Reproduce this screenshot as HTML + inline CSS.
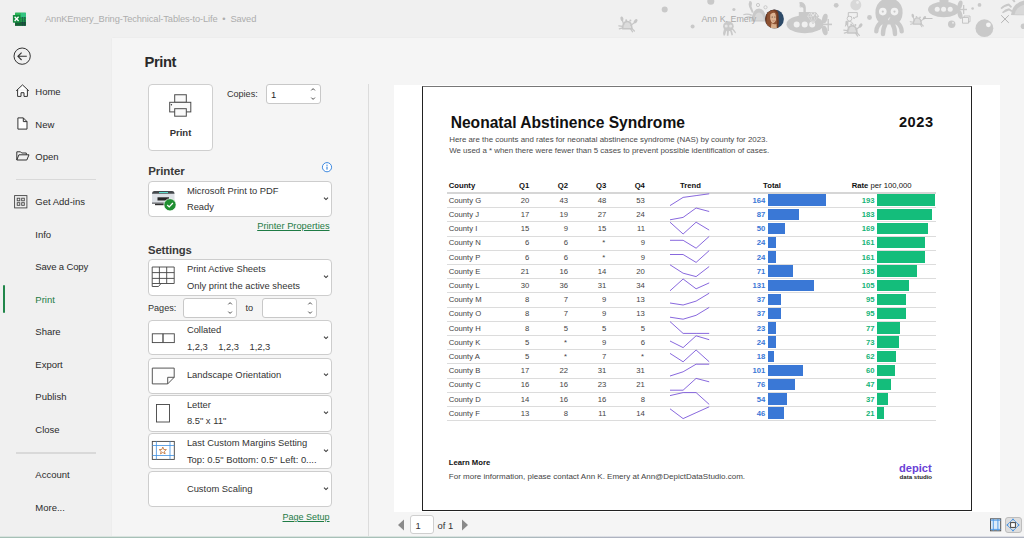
<!DOCTYPE html><html><head><meta charset="utf-8"><style>
html,body{margin:0;padding:0;width:1024px;height:538px;overflow:hidden;background:#f0f0f0;}
body{position:relative;font-family:"Liberation Sans", sans-serif;}
.t{position:absolute;white-space:nowrap;}
.r{position:absolute;}
</style></head><body>
<div class="r" style="left:0px;top:0px;width:1024px;height:538px;background:#f0f0f0;"></div>
<div class="r" style="left:112px;top:38px;width:912px;height:499px;background:#f5f5f5;box-shadow:-0.5px -0.5px 1.5px 0 rgba(0,0,0,0.10);"></div>
<div class="r" style="left:0px;top:536px;width:1024px;height:1px;background:linear-gradient(90deg,#d9e3df 0%,#d9e3df 40%,#dcdee5 60%,#dcdee5 100%);"></div>
<div class="r" style="left:0px;top:537px;width:1024px;height:1px;background:linear-gradient(90deg,#a6c0b6 0%,#a8c0b8 40%,#aeb3c0 60%,#aeb3c0 100%);"></div>
<div class="r" style="left:368px;top:84px;width:1px;height:452px;background:#dcdcdc;"></div>
<svg style="position:absolute;left:12px;top:12px" width="15" height="15" viewBox="0 0 15 15">
<rect x="3" y="0.7" width="11" height="13.1" rx="0.8" fill="#21a346"/>
<rect x="8.5" y="0.7" width="5.5" height="4.6" fill="#33c481"/>
<rect x="3" y="0.7" width="5.5" height="2" fill="#2db85c"/>
<rect x="3" y="10" width="11" height="3.8" fill="#185c37"/>
<path d="M8.5 6 H14 M8.5 9 H14 M10.5 5.3 V13.8 M12.5 5.3 V13.8" stroke="#1a2a5a" stroke-width="0.7" stroke-dasharray="0.8 0.8"/>
<rect x="0.9" y="3" width="7.4" height="7.7" rx="0.6" fill="#138a3e"/>
<path d="M2.6 4.7 L6.6 9 M6.6 4.7 L2.6 9" stroke="#fff" stroke-width="1.3"/>
</svg>
<div class="t" style="left:45.00px;top:15.43px;font-size:9.3px;line-height:9.3px;color:#adadad;font-weight:400;letter-spacing:-0.12px;">AnnKEmery_Bring-Technical-Tables-to-Life&nbsp; &bull; &nbsp;Saved</div>
<svg style="position:absolute;left:0;top:0" width="1024" height="38" viewBox="0 0 1024 38">
<g fill="#c9c9c9">
<!-- crab A -->
<defs><g id="crab">
<path d="M4.6 12.6 Q4.6 5.2 9.2 5.2 Q13.8 5.2 14 12.6 Z" fill="#dcdcdc" stroke="#c6c6c6" stroke-width="1.5" stroke-linejoin="round"/>
<path d="M5.8 8.6 L4.3 4 M12.9 9.2 L16.6 6.3 M4.6 10.2 L0.8 9.6 M4.7 11.7 L1.3 12.7 M13.6 12 L16.4 14.8 M12.6 12.6 L14.6 15.6" stroke="#c6c6c6" stroke-width="1.2" stroke-linecap="round" fill="none"/>
<ellipse cx="3.9" cy="2.6" rx="1.5" ry="2.4" transform="rotate(-12 3.9 2.6)" fill="#c6c6c6"/>
<ellipse cx="17.6" cy="5" rx="1.5" ry="2.4" transform="rotate(40 17.6 5)" fill="#c6c6c6"/>
<circle cx="8.2" cy="4" r="1" fill="#c6c6c6"/><circle cx="12.4" cy="4.4" r="1" fill="#c6c6c6"/>
</g></defs>
<use href="#crab" transform="translate(618 16.2)"/>
<!-- bubbles -->
<circle cx="664.7" cy="9.4" r="3"/><circle cx="692.6" cy="26.5" r="2"/><circle cx="710.8" cy="1.2" r="3.5"/>
<circle cx="733.9" cy="9.5" r="1.6"/>
<!-- small octopus -->
<ellipse cx="728.4" cy="26.2" rx="5.3" ry="5"/><circle cx="726.2" cy="26" r="1.5" fill="#e6e6e6"/><circle cx="730.6" cy="26" r="1.5" fill="#e6e6e6"/>
<path d="M724 29 Q722.5 33 723.5 35.5 L725 35.5 Q725.5 32 727 30 Z M727 30 L726.8 35.8 L728.5 35.8 L729 30 Z M729.5 30 Q731 32 731.5 35.5 L733 35 Q732.5 31.5 731 29 Z M731.5 29 Q734 31.5 735.3 33.5 L736 32.5 Q734.5 29.5 732.5 28 Z"/>
<!-- big crab -->
<path d="M751 21.5 Q752.5 8.5 759 8.5 Q765.5 8.5 766.5 21.5 Z"/>
<path d="M754 20.5 Q755 12.5 759 12.5 Q763 12.5 764 20.5 Z" fill="#d8d8d8"/>
<path d="M752 13 L749.2 7 Q748 3.5 749.5 1 Q751.5 0.5 752 3 L751.5 6.5 L753.5 12 Z"/>
<path d="M752 14.5 Q747 12.5 743.2 14.2 L743.5 15.2 Q747.5 14 751.5 16 Z M752 17 Q748 15.5 745 17.5 L745.5 18.3 Q748.5 17 751.8 18.5 Z"/>
<circle cx="758" cy="5" r="1.6" fill="none" stroke="#c9c9c9" stroke-width="1"/><circle cx="765.5" cy="7.3" r="1.6" fill="none" stroke="#c9c9c9" stroke-width="1"/>
<!-- sub 1 -->
<ellipse cx="805" cy="24.2" rx="18.5" ry="9"/>
<rect x="798.8" y="12" width="12" height="5"/>
<path d="M805.8 13 V7.5 Q805.5 3 801.5 2 Q799.5 1.6 799 3 Q798.6 5.8 800 7.6 Q802.8 6.6 803.4 8.5 V13 Z"/>
<path d="M799.3 3.2 Q799 5.5 800.2 7.2" stroke="#ececec" stroke-width="0.9" fill="none"/>
<ellipse cx="824.8" cy="18.5" rx="2.6" ry="4.8" transform="rotate(15 824.8 18.5)"/>
<ellipse cx="824.8" cy="30.5" rx="2.6" ry="4.8" transform="rotate(-15 824.8 30.5)"/>
<rect x="823" y="23.6" width="9" height="1.6"/><rect x="827.5" y="19" width="1.4" height="12"/>
<circle cx="796.7" cy="24.4" r="3" fill="#f0f0f0"/><circle cx="804.7" cy="24.4" r="3" fill="#f0f0f0"/><circle cx="812.2" cy="24.4" r="3" fill="#f0f0f0"/>
<defs><clipPath id="subclip"><ellipse cx="805" cy="24.2" rx="18.5" ry="9"/><rect x="798.8" y="12" width="12" height="5"/></clipPath></defs>
<path d="M807.5 16.3 L810 12.8 H816 L818.5 16.3 L813 23.4 Z M807.5 16.3 H818.5 M810.8 16.3 L813 23.4 L815.2 16.3 M810 12.8 L810.8 16.3 L813 12.8 L815.2 16.3 L816 12.8" fill="none" stroke="#bdbdbd" stroke-width="0.75"/>
<path d="M807.5 16.3 L810 12.8 H816 L818.5 16.3 L813 23.4 Z M807.5 16.3 H818.5 M810.8 16.3 L813 23.4 L815.2 16.3 M810 12.8 L810.8 16.3 L813 12.8 L815.2 16.3 L816 12.8" fill="none" stroke="#e2e2e2" stroke-width="0.75" clip-path="url(#subclip)"/>
<circle cx="836.2" cy="5.3" r="2.4"/>
<circle cx="855.8" cy="4.9" r="5.5" fill="#d8d8d8"/><circle cx="857.5" cy="2.5" r="1.4" fill="#ececec"/>
<!-- person + chat -->
<path d="M852 17 H848.3 V12.6 H857.3 V17 H855.5 L854 18.8 L853.5 17" fill="none" stroke="#b8b8b8" stroke-width="0.8"/>
<circle cx="849.5" cy="18.6" r="2.4" fill="#f0f0f0" stroke="#bcbcbc" stroke-width="0.8"/>
<path d="M845.3 26.5 Q846 21.5 849.5 21.5 Q853 21.5 853.7 26.5" fill="none" stroke="#bcbcbc" stroke-width="0.8"/>
<use href="#crab" transform="translate(843 20.5)"/>
<circle cx="869.5" cy="17.5" r="2.4"/>
<!-- octopus -->
<path d="M882 0 H896 Q903 4 902.6 13 Q902.3 21 896 24.5 H882 Q875.5 21 875.4 13 Q875.2 4 882 0 Z"/>
<g fill="none" stroke="#c9c9c9" stroke-width="4.4" stroke-linecap="round">
<path d="M881 22.5 Q876.5 26 876.3 31.3"/><path d="M885.5 24 Q883 28 883 34"/><path d="M892.5 24 Q895 28 895 34"/><path d="M897 22.5 Q901.5 26 901.7 31.3"/></g>
<circle cx="882.8" cy="11.6" r="3.8" fill="#f2f2f2"/><circle cx="882.8" cy="11.6" r="1.1"/>
<circle cx="894.5" cy="11.6" r="3.8" fill="#f2f2f2"/><circle cx="894.5" cy="11.6" r="1.1"/>
<path d="M888 19.8 Q888.5 17 890.5 17.3 Q889 18.5 889 20.5 Z" fill="#ececec"/>
<!-- small crab 2 -->
<use href="#crab" transform="translate(909.5 13.5) scale(0.85)"/>
<rect x="923" y="18" width="9.5" height="0.9" fill="#bdbdbd"/>
<!-- sub 2 -->
<ellipse cx="943.7" cy="9.5" rx="15.7" ry="7.8"/>
<rect x="939.5" y="0" width="9" height="2.5"/>
<ellipse cx="960" cy="4.8" rx="2.3" ry="4.5" transform="rotate(15 960 4.8)"/>
<ellipse cx="960" cy="14.5" rx="2.3" ry="4.5" transform="rotate(-15 960 14.5)"/>
<rect x="959" y="8.8" width="8" height="1.4"/><rect x="963" y="5" width="1.3" height="9"/>
<circle cx="937.2" cy="9.3" r="2.5" fill="#f0f0f0"/><circle cx="943.6" cy="9.3" r="2.5" fill="#f0f0f0"/><circle cx="950.2" cy="9.3" r="2.5" fill="#f0f0f0"/>
<path d="M962.5 17.5 H968.5 V23.2 H962.5 Z M964 17.5 V16 H970 V21.8 H968.5" fill="none" stroke="#bdbdbd" stroke-width="0.8"/>
<circle cx="951.7" cy="24.3" r="3.7"/><circle cx="953" cy="22.8" r="1" fill="#e8e8e8"/>
<circle cx="972.6" cy="8.5" r="1.3"/><circle cx="979.5" cy="4.9" r="1.9"/>
<circle cx="984.4" cy="28.2" r="8.9"/><circle cx="988.4" cy="24.8" r="2.4" fill="#f4f4f4"/>
<path d="M1001.2 15.3 L1008.8 22.9 M1008.8 15.3 L1001.2 22.9" stroke="#a3a3a3" stroke-width="0.8"/>
<!-- big crab right -->
<path d="M1011 15 Q1013 0 1030 0 V15.5 Z"/>
<path d="M1014.5 14.5 Q1017 4 1030 4 V15 Z" fill="#d8d8d8"/>
<path d="M1000.5 8 Q1004 4 1009 3.5 L1012 6.5 L1011 8 L1008.5 5.8 Q1004.5 6.8 1001.5 9.2 Z"/>
<path d="M1002 12.3 Q1005 8.8 1009 8.3 L1012.5 10.5 L1011.5 12 L1009 10.4 Q1006 11.2 1003 13.3 Z"/>
<path d="M1012 0 L1014 2.5 L1015.5 1.5 L1014.5 0 Z"/>
<circle cx="1023.5" cy="26.3" r="2.8"/>
</g>
<g>
<defs><clipPath id="av"><circle cx="774.5" cy="19" r="9.4"/></clipPath><filter id="bl"><feGaussianBlur stdDeviation="0.45"/></filter></defs>
<circle cx="774.5" cy="19" r="9.4" fill="#2d4a68"/>
<g clip-path="url(#av)" filter="url(#bl)">
<path d="M765 14 Q767 8.5 773 9 Q778.5 9.5 778.5 15 Q779.5 22 778 30 H765 Z" fill="#6e3a22"/>
<path d="M767.5 13 Q770 10 773.5 10.5 Q776 11.5 776.8 14 L777 24 Q775 28 772 30 H766.5 Q766 22 767.5 13 Z" fill="#8c5132"/>
<path d="M770.3 14.5 Q772.5 11.8 775 13 Q776.6 16 776 20 Q774.8 23.5 772.8 23.2 Q770.8 22.2 770.2 19 Z" fill="#dcb392"/>
<path d="M771.5 23 Q774 25 776.5 24 L777 30 H770.5 Z" fill="#d7ac88"/>
<circle cx="772.2" cy="17" r="0.55" fill="#3a2a20"/><circle cx="774.9" cy="17" r="0.55" fill="#3a2a20"/>
<path d="M772.5 20.6 Q773.6 21.3 774.6 20.6" stroke="#a0604a" stroke-width="0.5" fill="none"/>
</g>
</g>
</svg>
<div class="t" style="left:701.40px;top:15.37px;font-size:8.9px;line-height:8.9px;color:#a8a8a8;font-weight:400;">Ann K. Emery</div>
<svg style="position:absolute;left:12px;top:46px" width="21" height="21" viewBox="0 0 21 21">
<circle cx="10.15" cy="10.15" r="8.15" fill="none" stroke="#333" stroke-width="1"/>
<path d="M14.8 10.3 H6 M9.6 6.6 L5.9 10.3 L9.6 14" fill="none" stroke="#333" stroke-width="1.1"/>
</svg>
<div class="t" style="left:35.30px;top:87.36px;font-size:9.5px;line-height:9.5px;color:#2b2b2b;font-weight:400;">Home</div>
<div class="t" style="left:35.30px;top:119.86px;font-size:9.5px;line-height:9.5px;color:#2b2b2b;font-weight:400;">New</div>
<div class="t" style="left:35.30px;top:152.36px;font-size:9.5px;line-height:9.5px;color:#2b2b2b;font-weight:400;">Open</div>
<div class="t" style="left:35.30px;top:197.36px;font-size:9.5px;line-height:9.5px;color:#2b2b2b;font-weight:400;">Get Add-ins</div>
<div class="t" style="left:35.30px;top:229.86px;font-size:9.5px;line-height:9.5px;color:#2b2b2b;font-weight:400;">Info</div>
<div class="t" style="left:35.30px;top:262.36px;font-size:9.5px;line-height:9.5px;color:#2b2b2b;font-weight:400;letter-spacing:-0.15px;">Save a Copy</div>
<div class="t" style="left:35.30px;top:294.86px;font-size:9.5px;line-height:9.5px;color:#1e7b45;font-weight:400;">Print</div>
<div class="t" style="left:35.30px;top:327.36px;font-size:9.5px;line-height:9.5px;color:#2b2b2b;font-weight:400;">Share</div>
<div class="t" style="left:35.30px;top:359.86px;font-size:9.5px;line-height:9.5px;color:#2b2b2b;font-weight:400;">Export</div>
<div class="t" style="left:35.30px;top:392.36px;font-size:9.5px;line-height:9.5px;color:#2b2b2b;font-weight:400;">Publish</div>
<div class="t" style="left:35.30px;top:424.86px;font-size:9.5px;line-height:9.5px;color:#2b2b2b;font-weight:400;">Close</div>
<div class="t" style="left:35.30px;top:470.16px;font-size:9.5px;line-height:9.5px;color:#2b2b2b;font-weight:400;">Account</div>
<div class="t" style="left:35.30px;top:503.36px;font-size:9.5px;line-height:9.5px;color:#2b2b2b;font-weight:400;">More...</div>
<div class="r" style="left:16px;top:178.5px;width:80px;height:1.5px;background:#d9d9d9;"></div>
<div class="r" style="left:16px;top:452px;width:80px;height:1.5px;background:#d9d9d9;"></div>
<div class="r" style="left:3px;top:285px;width:2.2px;height:28px;background:#21864a;border-radius:1px;"></div>
<svg style="position:absolute;left:15px;top:84px" width="14" height="14" viewBox="0 0 14 14" fill="none" stroke="#333" stroke-width="1">
<path d="M1.2 6.8 L7.5 0.9 L13.8 6.8 M2.6 5.6 V12.4 H6 V8.7 H9 V12.4 H12.4 V5.6" fill="#fff"/></svg>
<svg style="position:absolute;left:17px;top:117px" width="11" height="13" viewBox="0 0 11 13" fill="none" stroke="#333" stroke-width="1">
<path d="M0.9 0.9 H6.3 L10 4.6 V12.1 H0.9 Z M6.3 0.9 V4.6 H10" fill="#fff"/></svg>
<svg style="position:absolute;left:15.5px;top:150.5px" width="14" height="10" viewBox="0 0 14 10" fill="none" stroke="#333" stroke-width="1">
<path d="M0.8 9 V0.8 H4.5 L5.7 2 H10.3 V3.8 M0.8 9 L2.9 3.8 H13 L10.8 9 Z"/></svg>
<svg style="position:absolute;left:14px;top:194.5px" width="14" height="14" viewBox="0 0 14 14" fill="none" stroke="#444" stroke-width="0.9">
<rect x="0.6" y="0.6" width="12.3" height="12.3"/><rect x="3.2" y="3.2" width="2.6" height="2.6"/><rect x="7.7" y="3.2" width="2.6" height="2.6"/><rect x="3.2" y="7.7" width="2.6" height="2.6"/><rect x="7.7" y="7.7" width="2.6" height="2.6"/></svg>
<div class="t" style="left:144.60px;top:54.87px;font-size:14.8px;line-height:14.8px;color:#2a2a2a;font-weight:700;letter-spacing:-0.45px;">Print</div>
<div class="r" style="left:147.5px;top:84px;width:65px;height:67px;background:#fff;border:1px solid #cfcfcf;border-radius:4px;box-sizing:border-box;"></div>
<svg style="position:absolute;left:168px;top:93px" width="25" height="25" viewBox="0 0 25 25" stroke="#4a4a4a" stroke-width="1">
<rect x="6.7" y="1.75" width="11.6" height="7.6" fill="#fafafa"/><rect x="1.7" y="9.3" width="21.1" height="9.6" fill="#fafafa"/><rect x="6.7" y="15.7" width="11.6" height="7.5" fill="#fafafa"/><circle cx="3.4" cy="11.8" r="0.7" fill="#333" stroke="none"/></svg>
<div class="t" style="left:80.50px;width:200px;text-align:center;top:127.96px;font-size:9.5px;line-height:9.5px;color:#333;font-weight:700;">Print</div>
<div class="t" style="left:226.90px;top:90.10px;font-size:9.1px;line-height:9.1px;color:#333;font-weight:400;">Copies:</div>
<div class="r" style="left:266px;top:84px;width:55px;height:20px;background:#fff;border:1px solid #c8c8c8;border-radius:3px;box-sizing:border-box;"></div>
<div class="t" style="left:271.00px;top:90.04px;font-size:9.4px;line-height:9.4px;color:#262626;font-weight:400;">1</div>
<svg style="position:absolute;left:309px;top:86px" width="8" height="16" viewBox="0 0 8 16" fill="none" stroke="#4a4a4a" stroke-width="1">
<path d="M2.3 4.4 L4.1 2.6 L5.9 4.4 M2.3 11.6 L4.1 13.4 L5.9 11.6"/></svg>
<div class="t" style="left:148.20px;top:165.77px;font-size:11.5px;line-height:11.5px;color:#3a3a3a;font-weight:700;letter-spacing:-0.1px;">Printer</div>
<svg style="position:absolute;left:321px;top:161px" width="12" height="12" viewBox="0 0 12 12">
<circle cx="6" cy="6.2" r="4.6" fill="#fff" stroke="#3f8ae0" stroke-width="1"/><rect x="5.4" y="5.6" width="1.2" height="3" fill="#3f8ae0"/><circle cx="6" cy="4.2" r="0.7" fill="#3f8ae0"/></svg>
<div class="r" style="left:147.5px;top:180.6px;width:184px;height:36.2px;background:#fff;border:1px solid #cdcdcd;border-radius:4px;box-sizing:border-box;"></div>
<svg style="position:absolute;left:322px;top:194.5px" width="8" height="8" viewBox="0 0 8 8" fill="none" stroke="#3a3a3a" stroke-width="1.1">
<path d="M2 2.7 L4 4.6 L6 2.7"/></svg>
<div class="t" style="left:186.90px;top:185.94px;font-size:9.4px;line-height:9.4px;color:#333;font-weight:400;">Microsoft Print to PDF</div>
<div class="t" style="left:186.90px;top:202.34px;font-size:9.4px;line-height:9.4px;color:#333;font-weight:400;">Ready</div>
<svg style="position:absolute;left:151px;top:188px" width="27" height="24" viewBox="0 0 27 24">
<rect x="1" y="5" width="22.5" height="10.5" fill="#dde1e6"/><path d="M1 5.8 Q1 2.9 3.5 2.9 H21 Q23.5 2.9 23.5 5.8 Z" fill="#45484c"/>
<rect x="8" y="4" width="9" height="1.1" fill="#5fdccc"/><rect x="1" y="14.5" width="22.5" height="1.3" fill="#6a6d71"/>
<rect x="6.5" y="9.3" width="11.5" height="3.2" fill="#262626"/><rect x="4" y="15.8" width="11" height="1.4" fill="#303030"/>
<circle cx="19" cy="16.8" r="6.1" fill="#1f8f31" stroke="#fff" stroke-width="0.7"/><path d="M16.2 17 L18.2 18.9 L21.9 15" stroke="#fff" stroke-width="1.3" fill="none"/></svg>
<div class="t" style="left:257.20px;top:221.93px;font-size:9.3px;line-height:9.3px;color:#1e7b45;font-weight:400;"><u>Printer Properties</u></div>
<div class="t" style="left:148.00px;top:244.93px;font-size:11.3px;line-height:11.3px;color:#3a3a3a;font-weight:700;letter-spacing:-0.1px;">Settings</div>
<div class="r" style="left:147.5px;top:259.1px;width:184px;height:37px;background:#fff;border:1px solid #cdcdcd;border-radius:4px;box-sizing:border-box;"></div>
<svg style="position:absolute;left:322px;top:273.4px" width="8" height="8" viewBox="0 0 8 8" fill="none" stroke="#3a3a3a" stroke-width="1.1">
<path d="M2 2.7 L4 4.6 L6 2.7"/></svg>
<div class="t" style="left:186.90px;top:264.44px;font-size:9.4px;line-height:9.4px;color:#333;font-weight:400;">Print Active Sheets</div>
<div class="t" style="left:186.90px;top:280.84px;font-size:9.4px;line-height:9.4px;color:#333;font-weight:400;">Only print the active sheets</div>
<svg style="position:absolute;left:151px;top:265px" width="25" height="23" viewBox="0 0 25 23" fill="none" stroke="#444" stroke-width="0.9">
<path d="M1.2 2 H23.2 V18.5 H10 L7.5 21.5 H1.2 Z M1.2 7.6 H23.2 M1.2 13.4 H23.2 M1.2 18.5 H10 M8.4 2 V18.5 M15.7 2 V18.5"/></svg>
<div class="t" style="left:148.00px;top:304.00px;font-size:9.1px;line-height:9.1px;color:#333;font-weight:400;">Pages:</div>
<div class="r" style="left:183px;top:298px;width:54px;height:20px;background:#fff;border:1px solid #c8c8c8;border-radius:3px;box-sizing:border-box;"></div>
<svg style="position:absolute;left:226px;top:300px" width="8" height="16" viewBox="0 0 8 16" fill="none" stroke="#4a4a4a" stroke-width="1">
<path d="M2.3 4.4 L4.1 2.6 L5.9 4.4 M2.3 11.6 L4.1 13.4 L5.9 11.6"/></svg>
<div class="t" style="left:149.40px;width:200px;text-align:center;top:303.91px;font-size:9.2px;line-height:9.2px;color:#333;font-weight:400;">to</div>
<div class="r" style="left:262px;top:298px;width:54.5px;height:20px;background:#fff;border:1px solid #c8c8c8;border-radius:3px;box-sizing:border-box;"></div>
<svg style="position:absolute;left:306px;top:300px" width="8" height="16" viewBox="0 0 8 16" fill="none" stroke="#4a4a4a" stroke-width="1">
<path d="M2.3 4.4 L4.1 2.6 L5.9 4.4 M2.3 11.6 L4.1 13.4 L5.9 11.6"/></svg>
<div class="r" style="left:147.5px;top:320.1px;width:184px;height:35.1px;background:#fff;border:1px solid #cdcdcd;border-radius:4px;box-sizing:border-box;"></div>
<svg style="position:absolute;left:322px;top:333.5px" width="8" height="8" viewBox="0 0 8 8" fill="none" stroke="#3a3a3a" stroke-width="1.1">
<path d="M2 2.7 L4 4.6 L6 2.7"/></svg>
<div class="t" style="left:186.90px;top:325.44px;font-size:9.4px;line-height:9.4px;color:#333;font-weight:400;">Collated</div>
<div class="t" style="left:186.90px;top:341.84px;font-size:9.4px;line-height:9.4px;color:#333;font-weight:400;">1,2,3&nbsp;&nbsp;&nbsp;&nbsp;1,2,3&nbsp;&nbsp;&nbsp;&nbsp;1,2,3</div>
<svg style="position:absolute;left:151px;top:331.5px" width="24" height="13" viewBox="0 0 24 13" fill="none" stroke="#444" stroke-width="0.9">
<rect x="1.3" y="1.8" width="22" height="8.8"/><path d="M12 1.8 V10.6" stroke-width="1.3"/></svg>
<div class="r" style="left:147.5px;top:357.5px;width:184px;height:36.2px;background:#fff;border:1px solid #cdcdcd;border-radius:4px;box-sizing:border-box;"></div>
<svg style="position:absolute;left:322px;top:371.4px" width="8" height="8" viewBox="0 0 8 8" fill="none" stroke="#3a3a3a" stroke-width="1.1">
<path d="M2 2.7 L4 4.6 L6 2.7"/></svg>
<div class="t" style="left:186.90px;top:370.34px;font-size:9.4px;line-height:9.4px;color:#333;font-weight:400;">Landscape Orientation</div>
<svg style="position:absolute;left:151px;top:366.5px" width="24" height="19" viewBox="0 0 24 19" fill="none" stroke="#444" stroke-width="0.9">
<path d="M1.3 1.1 H23.2 V10.3 L16.7 16.9 H1.3 Z M16.7 16.9 V10.3 H23.2" fill="#fdfdfd"/></svg>
<div class="r" style="left:147.5px;top:394.7px;width:184px;height:37px;background:#fff;border:1px solid #cdcdcd;border-radius:4px;box-sizing:border-box;"></div>
<svg style="position:absolute;left:322px;top:409.0px" width="8" height="8" viewBox="0 0 8 8" fill="none" stroke="#3a3a3a" stroke-width="1.1">
<path d="M2 2.7 L4 4.6 L6 2.7"/></svg>
<div class="t" style="left:186.90px;top:400.04px;font-size:9.4px;line-height:9.4px;color:#333;font-weight:400;">Letter</div>
<div class="t" style="left:186.90px;top:416.44px;font-size:9.4px;line-height:9.4px;color:#333;font-weight:400;">8.5" x 11"</div>
<svg style="position:absolute;left:155px;top:403px" width="16" height="21" viewBox="0 0 16 21" fill="none" stroke="#444" stroke-width="0.9">
<rect x="1.5" y="1.5" width="13" height="17.5"/></svg>
<div class="r" style="left:147.5px;top:433.1px;width:184px;height:35.6px;background:#fff;border:1px solid #cdcdcd;border-radius:4px;box-sizing:border-box;"></div>
<svg style="position:absolute;left:322px;top:446.7px" width="8" height="8" viewBox="0 0 8 8" fill="none" stroke="#3a3a3a" stroke-width="1.1">
<path d="M2 2.7 L4 4.6 L6 2.7"/></svg>
<div class="t" style="left:186.90px;top:438.44px;font-size:9.4px;line-height:9.4px;color:#333;font-weight:400;">Last Custom Margins Setting</div>
<div class="t" style="left:186.90px;top:454.84px;font-size:9.4px;line-height:9.4px;color:#333;font-weight:400;">Top: 0.5" Bottom: 0.5" Left: 0....</div>
<svg style="position:absolute;left:151px;top:440px" width="24" height="21" viewBox="0 0 24 21" fill="none">
<rect x="1.3" y="1.4" width="22" height="18" stroke="#444" stroke-width="0.9"/>
<path d="M5.4 1.4 V19.4 M19 1.4 V19.4 M1.3 5.5 H23.3 M1.3 15.5 H23.3" stroke="#3f8fdf" stroke-width="0.8"/>
<path d="M11.8 7 L12.8 9.5 L15.4 9.6 L13.4 11.3 L14.1 13.9 L11.8 12.4 L9.5 13.9 L10.2 11.3 L8.2 9.6 L10.8 9.5 Z" stroke="#c47c45" stroke-width="0.9"/></svg>
<div class="r" style="left:147.5px;top:471.0px;width:184px;height:36.1px;background:#fff;border:1px solid #cdcdcd;border-radius:4px;box-sizing:border-box;"></div>
<svg style="position:absolute;left:322px;top:484.9px" width="8" height="8" viewBox="0 0 8 8" fill="none" stroke="#3a3a3a" stroke-width="1.1">
<path d="M2 2.7 L4 4.6 L6 2.7"/></svg>
<div class="t" style="left:186.90px;top:483.84px;font-size:9.4px;line-height:9.4px;color:#333;font-weight:400;">Custom Scaling</div>
<div class="t" style="left:282.50px;top:513.18px;font-size:9.0px;line-height:9.0px;color:#1e7b45;font-weight:400;"><u>Page Setup</u></div>
<div class="r" style="left:393.5px;top:84.5px;width:606.5px;height:427.5px;background:#fff;"></div>
<div class="r" style="left:422px;top:86px;width:550px;height:425px;border:1.6px solid #222;border-top-color:#777;box-sizing:border-box;"></div>
<div class="t" style="left:450.70px;top:114.59px;font-size:15.6px;line-height:15.6px;color:#111;font-weight:700;">Neonatal Abstinence Syndrome</div>
<div class="t" style="right:90.40px;top:114.94px;font-size:14.6px;line-height:14.6px;color:#111;font-weight:700;letter-spacing:0.55px;">2023</div>
<div class="t" style="left:449.20px;top:135.51px;font-size:7.9px;line-height:7.9px;color:#4a4a4a;font-weight:400;">Here are the counts and rates for neonatal abstinence syndrome (NAS) by county for 2023.</div>
<div class="t" style="left:449.20px;top:146.91px;font-size:7.9px;line-height:7.9px;color:#4a4a4a;font-weight:400;">We used a * when there were fewer than 5 cases to prevent possible identification of cases.</div>
<div class="t" style="left:448.70px;top:181.98px;font-size:7.7px;line-height:7.7px;color:#111;font-weight:700;">County</div>
<div class="t" style="right:494.80px;top:181.98px;font-size:7.7px;line-height:7.7px;color:#111;font-weight:700;">Q1</div>
<div class="t" style="right:455.90px;top:181.98px;font-size:7.7px;line-height:7.7px;color:#111;font-weight:700;">Q2</div>
<div class="t" style="right:417.80px;top:181.98px;font-size:7.7px;line-height:7.7px;color:#111;font-weight:700;">Q3</div>
<div class="t" style="right:379.10px;top:181.98px;font-size:7.7px;line-height:7.7px;color:#111;font-weight:700;">Q4</div>
<div class="t" style="left:590.50px;width:200px;text-align:center;top:181.98px;font-size:7.7px;line-height:7.7px;color:#111;font-weight:700;">Trend</div>
<div class="t" style="left:672.00px;width:200px;text-align:center;top:181.98px;font-size:7.7px;line-height:7.7px;color:#111;font-weight:700;">Total</div>
<div class="t" style="left:851.70px;top:181.98px;font-size:7.7px;line-height:7.7px;color:#111;font-weight:400;"><b>Rate</b> per 100,000</div>
<div class="r" style="left:447px;top:192px;width:489px;height:2px;background:#d6d6d6;"></div>
<div class="t" style="left:448.70px;top:196.78px;font-size:7.7px;line-height:7.7px;color:#444;font-weight:400;">County G</div>
<div class="t" style="right:494.80px;top:196.78px;font-size:7.7px;line-height:7.7px;color:#444;font-weight:400;">20</div>
<div class="t" style="right:455.90px;top:196.78px;font-size:7.7px;line-height:7.7px;color:#444;font-weight:400;">43</div>
<div class="t" style="right:417.80px;top:196.78px;font-size:7.7px;line-height:7.7px;color:#444;font-weight:400;">48</div>
<div class="t" style="right:379.10px;top:196.78px;font-size:7.7px;line-height:7.7px;color:#444;font-weight:400;">53</div>
<div class="r" style="left:447px;top:207.0px;width:489px;height:1px;background:#dcdcdc;"></div>
<div class="r" style="left:768.2px;top:194.4px;width:57.5576px;height:11.4px;background:#3a78d6;"></div>
<div class="t" style="right:258.80px;top:196.78px;font-size:7.7px;line-height:7.7px;color:#3a78d6;font-weight:700;">164</div>
<div class="r" style="left:877.1px;top:194.4px;width:57.524499999999996px;height:11.4px;background:#14bd7b;"></div>
<div class="t" style="right:149.50px;top:196.78px;font-size:7.7px;line-height:7.7px;color:#15b377;font-weight:700;">193</div>
<div class="t" style="left:448.70px;top:210.98px;font-size:7.7px;line-height:7.7px;color:#444;font-weight:400;">County J</div>
<div class="t" style="right:494.80px;top:210.98px;font-size:7.7px;line-height:7.7px;color:#444;font-weight:400;">17</div>
<div class="t" style="right:455.90px;top:210.98px;font-size:7.7px;line-height:7.7px;color:#444;font-weight:400;">19</div>
<div class="t" style="right:417.80px;top:210.98px;font-size:7.7px;line-height:7.7px;color:#444;font-weight:400;">27</div>
<div class="t" style="right:379.10px;top:210.98px;font-size:7.7px;line-height:7.7px;color:#444;font-weight:400;">24</div>
<div class="r" style="left:447px;top:221.0px;width:489px;height:1px;background:#dcdcdc;"></div>
<div class="r" style="left:768.2px;top:208.6px;width:30.3458px;height:11.4px;background:#3a78d6;"></div>
<div class="t" style="right:258.80px;top:210.98px;font-size:7.7px;line-height:7.7px;color:#3a78d6;font-weight:700;">87</div>
<div class="r" style="left:877.1px;top:208.6px;width:54.55949999999999px;height:11.4px;background:#14bd7b;"></div>
<div class="t" style="right:149.50px;top:210.98px;font-size:7.7px;line-height:7.7px;color:#15b377;font-weight:700;">183</div>
<div class="t" style="left:448.70px;top:225.18px;font-size:7.7px;line-height:7.7px;color:#444;font-weight:400;">County I</div>
<div class="t" style="right:494.80px;top:225.18px;font-size:7.7px;line-height:7.7px;color:#444;font-weight:400;">15</div>
<div class="t" style="right:455.90px;top:225.18px;font-size:7.7px;line-height:7.7px;color:#444;font-weight:400;">9</div>
<div class="t" style="right:417.80px;top:225.18px;font-size:7.7px;line-height:7.7px;color:#444;font-weight:400;">15</div>
<div class="t" style="right:379.10px;top:225.18px;font-size:7.7px;line-height:7.7px;color:#444;font-weight:400;">11</div>
<div class="r" style="left:447px;top:235.5px;width:489px;height:1px;background:#dcdcdc;"></div>
<div class="r" style="left:768.2px;top:222.8px;width:17.27px;height:11.4px;background:#3a78d6;"></div>
<div class="t" style="right:258.80px;top:225.18px;font-size:7.7px;line-height:7.7px;color:#3a78d6;font-weight:700;">50</div>
<div class="r" style="left:877.1px;top:222.8px;width:50.4085px;height:11.4px;background:#14bd7b;"></div>
<div class="t" style="right:149.50px;top:225.18px;font-size:7.7px;line-height:7.7px;color:#15b377;font-weight:700;">169</div>
<div class="t" style="left:448.70px;top:239.38px;font-size:7.7px;line-height:7.7px;color:#444;font-weight:400;">County N</div>
<div class="t" style="right:494.80px;top:239.38px;font-size:7.7px;line-height:7.7px;color:#444;font-weight:400;">6</div>
<div class="t" style="right:455.90px;top:239.38px;font-size:7.7px;line-height:7.7px;color:#444;font-weight:400;">6</div>
<div class="t" style="right:418.80px;top:239.38px;font-size:7.7px;line-height:7.7px;color:#444;font-weight:400;">*</div>
<div class="t" style="right:379.10px;top:239.38px;font-size:7.7px;line-height:7.7px;color:#444;font-weight:400;">9</div>
<div class="r" style="left:447px;top:249.5px;width:489px;height:1px;background:#dcdcdc;"></div>
<div class="r" style="left:768.2px;top:237.0px;width:8.0816px;height:11.4px;background:#3a78d6;"></div>
<div class="t" style="right:258.80px;top:239.38px;font-size:7.7px;line-height:7.7px;color:#3a78d6;font-weight:700;">24</div>
<div class="r" style="left:877.1px;top:237.0px;width:48.0365px;height:11.4px;background:#14bd7b;"></div>
<div class="t" style="right:149.50px;top:239.38px;font-size:7.7px;line-height:7.7px;color:#15b377;font-weight:700;">161</div>
<div class="t" style="left:448.70px;top:253.58px;font-size:7.7px;line-height:7.7px;color:#444;font-weight:400;">County P</div>
<div class="t" style="right:494.80px;top:253.58px;font-size:7.7px;line-height:7.7px;color:#444;font-weight:400;">6</div>
<div class="t" style="right:455.90px;top:253.58px;font-size:7.7px;line-height:7.7px;color:#444;font-weight:400;">6</div>
<div class="t" style="right:418.80px;top:253.58px;font-size:7.7px;line-height:7.7px;color:#444;font-weight:400;">*</div>
<div class="t" style="right:379.10px;top:253.58px;font-size:7.7px;line-height:7.7px;color:#444;font-weight:400;">9</div>
<div class="r" style="left:447px;top:264.0px;width:489px;height:1px;background:#dcdcdc;"></div>
<div class="r" style="left:768.2px;top:251.20000000000002px;width:8.0816px;height:11.4px;background:#3a78d6;"></div>
<div class="t" style="right:258.80px;top:253.58px;font-size:7.7px;line-height:7.7px;color:#3a78d6;font-weight:700;">24</div>
<div class="r" style="left:877.1px;top:251.20000000000002px;width:48.0365px;height:11.4px;background:#14bd7b;"></div>
<div class="t" style="right:149.50px;top:253.58px;font-size:7.7px;line-height:7.7px;color:#15b377;font-weight:700;">161</div>
<div class="t" style="left:448.70px;top:267.78px;font-size:7.7px;line-height:7.7px;color:#444;font-weight:400;">County E</div>
<div class="t" style="right:494.80px;top:267.78px;font-size:7.7px;line-height:7.7px;color:#444;font-weight:400;">21</div>
<div class="t" style="right:455.90px;top:267.78px;font-size:7.7px;line-height:7.7px;color:#444;font-weight:400;">16</div>
<div class="t" style="right:417.80px;top:267.78px;font-size:7.7px;line-height:7.7px;color:#444;font-weight:400;">14</div>
<div class="t" style="right:379.10px;top:267.78px;font-size:7.7px;line-height:7.7px;color:#444;font-weight:400;">20</div>
<div class="r" style="left:447px;top:278.0px;width:489px;height:1px;background:#dcdcdc;"></div>
<div class="r" style="left:768.2px;top:265.40000000000003px;width:24.6914px;height:11.4px;background:#3a78d6;"></div>
<div class="t" style="right:258.80px;top:267.78px;font-size:7.7px;line-height:7.7px;color:#3a78d6;font-weight:700;">71</div>
<div class="r" style="left:877.1px;top:265.40000000000003px;width:40.32749999999999px;height:11.4px;background:#14bd7b;"></div>
<div class="t" style="right:149.50px;top:267.78px;font-size:7.7px;line-height:7.7px;color:#15b377;font-weight:700;">135</div>
<div class="t" style="left:448.70px;top:281.98px;font-size:7.7px;line-height:7.7px;color:#444;font-weight:400;">County L</div>
<div class="t" style="right:494.80px;top:281.98px;font-size:7.7px;line-height:7.7px;color:#444;font-weight:400;">30</div>
<div class="t" style="right:455.90px;top:281.98px;font-size:7.7px;line-height:7.7px;color:#444;font-weight:400;">36</div>
<div class="t" style="right:417.80px;top:281.98px;font-size:7.7px;line-height:7.7px;color:#444;font-weight:400;">31</div>
<div class="t" style="right:379.10px;top:281.98px;font-size:7.7px;line-height:7.7px;color:#444;font-weight:400;">34</div>
<div class="r" style="left:447px;top:292.0px;width:489px;height:1px;background:#dcdcdc;"></div>
<div class="r" style="left:768.2px;top:279.6px;width:45.8954px;height:11.4px;background:#3a78d6;"></div>
<div class="t" style="right:258.80px;top:281.98px;font-size:7.7px;line-height:7.7px;color:#3a78d6;font-weight:700;">131</div>
<div class="r" style="left:877.1px;top:279.6px;width:31.4325px;height:11.4px;background:#14bd7b;"></div>
<div class="t" style="right:149.50px;top:281.98px;font-size:7.7px;line-height:7.7px;color:#15b377;font-weight:700;">105</div>
<div class="t" style="left:448.70px;top:296.18px;font-size:7.7px;line-height:7.7px;color:#444;font-weight:400;">County M</div>
<div class="t" style="right:494.80px;top:296.18px;font-size:7.7px;line-height:7.7px;color:#444;font-weight:400;">8</div>
<div class="t" style="right:455.90px;top:296.18px;font-size:7.7px;line-height:7.7px;color:#444;font-weight:400;">7</div>
<div class="t" style="right:417.80px;top:296.18px;font-size:7.7px;line-height:7.7px;color:#444;font-weight:400;">9</div>
<div class="t" style="right:379.10px;top:296.18px;font-size:7.7px;line-height:7.7px;color:#444;font-weight:400;">13</div>
<div class="r" style="left:447px;top:306.5px;width:489px;height:1px;background:#dcdcdc;"></div>
<div class="r" style="left:768.2px;top:293.8px;width:12.675799999999999px;height:11.4px;background:#3a78d6;"></div>
<div class="t" style="right:258.80px;top:296.18px;font-size:7.7px;line-height:7.7px;color:#3a78d6;font-weight:700;">37</div>
<div class="r" style="left:877.1px;top:293.8px;width:28.467499999999998px;height:11.4px;background:#14bd7b;"></div>
<div class="t" style="right:149.50px;top:296.18px;font-size:7.7px;line-height:7.7px;color:#15b377;font-weight:700;">95</div>
<div class="t" style="left:448.70px;top:310.38px;font-size:7.7px;line-height:7.7px;color:#444;font-weight:400;">County O</div>
<div class="t" style="right:494.80px;top:310.38px;font-size:7.7px;line-height:7.7px;color:#444;font-weight:400;">8</div>
<div class="t" style="right:455.90px;top:310.38px;font-size:7.7px;line-height:7.7px;color:#444;font-weight:400;">7</div>
<div class="t" style="right:417.80px;top:310.38px;font-size:7.7px;line-height:7.7px;color:#444;font-weight:400;">9</div>
<div class="t" style="right:379.10px;top:310.38px;font-size:7.7px;line-height:7.7px;color:#444;font-weight:400;">13</div>
<div class="r" style="left:447px;top:320.5px;width:489px;height:1px;background:#dcdcdc;"></div>
<div class="r" style="left:768.2px;top:308.0px;width:12.675799999999999px;height:11.4px;background:#3a78d6;"></div>
<div class="t" style="right:258.80px;top:310.38px;font-size:7.7px;line-height:7.7px;color:#3a78d6;font-weight:700;">37</div>
<div class="r" style="left:877.1px;top:308.0px;width:28.467499999999998px;height:11.4px;background:#14bd7b;"></div>
<div class="t" style="right:149.50px;top:310.38px;font-size:7.7px;line-height:7.7px;color:#15b377;font-weight:700;">95</div>
<div class="t" style="left:448.70px;top:324.58px;font-size:7.7px;line-height:7.7px;color:#444;font-weight:400;">County H</div>
<div class="t" style="right:494.80px;top:324.58px;font-size:7.7px;line-height:7.7px;color:#444;font-weight:400;">8</div>
<div class="t" style="right:455.90px;top:324.58px;font-size:7.7px;line-height:7.7px;color:#444;font-weight:400;">5</div>
<div class="t" style="right:417.80px;top:324.58px;font-size:7.7px;line-height:7.7px;color:#444;font-weight:400;">5</div>
<div class="t" style="right:379.10px;top:324.58px;font-size:7.7px;line-height:7.7px;color:#444;font-weight:400;">5</div>
<div class="r" style="left:447px;top:335.0px;width:489px;height:1px;background:#dcdcdc;"></div>
<div class="r" style="left:768.2px;top:322.20000000000005px;width:7.728199999999999px;height:11.4px;background:#3a78d6;"></div>
<div class="t" style="right:258.80px;top:324.58px;font-size:7.7px;line-height:7.7px;color:#3a78d6;font-weight:700;">23</div>
<div class="r" style="left:877.1px;top:322.20000000000005px;width:23.1305px;height:11.4px;background:#14bd7b;"></div>
<div class="t" style="right:149.50px;top:324.58px;font-size:7.7px;line-height:7.7px;color:#15b377;font-weight:700;">77</div>
<div class="t" style="left:448.70px;top:338.78px;font-size:7.7px;line-height:7.7px;color:#444;font-weight:400;">County K</div>
<div class="t" style="right:494.80px;top:338.78px;font-size:7.7px;line-height:7.7px;color:#444;font-weight:400;">5</div>
<div class="t" style="right:456.90px;top:338.78px;font-size:7.7px;line-height:7.7px;color:#444;font-weight:400;">*</div>
<div class="t" style="right:417.80px;top:338.78px;font-size:7.7px;line-height:7.7px;color:#444;font-weight:400;">9</div>
<div class="t" style="right:379.10px;top:338.78px;font-size:7.7px;line-height:7.7px;color:#444;font-weight:400;">6</div>
<div class="r" style="left:447px;top:349.0px;width:489px;height:1px;background:#dcdcdc;"></div>
<div class="r" style="left:768.2px;top:336.40000000000003px;width:8.0816px;height:11.4px;background:#3a78d6;"></div>
<div class="t" style="right:258.80px;top:338.78px;font-size:7.7px;line-height:7.7px;color:#3a78d6;font-weight:700;">24</div>
<div class="r" style="left:877.1px;top:336.40000000000003px;width:21.9445px;height:11.4px;background:#14bd7b;"></div>
<div class="t" style="right:149.50px;top:338.78px;font-size:7.7px;line-height:7.7px;color:#15b377;font-weight:700;">73</div>
<div class="t" style="left:448.70px;top:352.98px;font-size:7.7px;line-height:7.7px;color:#444;font-weight:400;">County A</div>
<div class="t" style="right:494.80px;top:352.98px;font-size:7.7px;line-height:7.7px;color:#444;font-weight:400;">5</div>
<div class="t" style="right:456.90px;top:352.98px;font-size:7.7px;line-height:7.7px;color:#444;font-weight:400;">*</div>
<div class="t" style="right:417.80px;top:352.98px;font-size:7.7px;line-height:7.7px;color:#444;font-weight:400;">7</div>
<div class="t" style="right:380.10px;top:352.98px;font-size:7.7px;line-height:7.7px;color:#444;font-weight:400;">*</div>
<div class="r" style="left:447px;top:363.0px;width:489px;height:1px;background:#dcdcdc;"></div>
<div class="r" style="left:768.2px;top:350.6px;width:5.9612px;height:11.4px;background:#3a78d6;"></div>
<div class="t" style="right:258.80px;top:352.98px;font-size:7.7px;line-height:7.7px;color:#3a78d6;font-weight:700;">18</div>
<div class="r" style="left:877.1px;top:350.6px;width:18.683px;height:11.4px;background:#14bd7b;"></div>
<div class="t" style="right:149.50px;top:352.98px;font-size:7.7px;line-height:7.7px;color:#15b377;font-weight:700;">62</div>
<div class="t" style="left:448.70px;top:367.18px;font-size:7.7px;line-height:7.7px;color:#444;font-weight:400;">County B</div>
<div class="t" style="right:494.80px;top:367.18px;font-size:7.7px;line-height:7.7px;color:#444;font-weight:400;">17</div>
<div class="t" style="right:455.90px;top:367.18px;font-size:7.7px;line-height:7.7px;color:#444;font-weight:400;">22</div>
<div class="t" style="right:417.80px;top:367.18px;font-size:7.7px;line-height:7.7px;color:#444;font-weight:400;">31</div>
<div class="t" style="right:379.10px;top:367.18px;font-size:7.7px;line-height:7.7px;color:#444;font-weight:400;">31</div>
<div class="r" style="left:447px;top:377.5px;width:489px;height:1px;background:#dcdcdc;"></div>
<div class="r" style="left:768.2px;top:364.8px;width:35.2934px;height:11.4px;background:#3a78d6;"></div>
<div class="t" style="right:258.80px;top:367.18px;font-size:7.7px;line-height:7.7px;color:#3a78d6;font-weight:700;">101</div>
<div class="r" style="left:877.1px;top:364.8px;width:18.09px;height:11.4px;background:#14bd7b;"></div>
<div class="t" style="right:149.50px;top:367.18px;font-size:7.7px;line-height:7.7px;color:#15b377;font-weight:700;">60</div>
<div class="t" style="left:448.70px;top:381.38px;font-size:7.7px;line-height:7.7px;color:#444;font-weight:400;">County C</div>
<div class="t" style="right:494.80px;top:381.38px;font-size:7.7px;line-height:7.7px;color:#444;font-weight:400;">16</div>
<div class="t" style="right:455.90px;top:381.38px;font-size:7.7px;line-height:7.7px;color:#444;font-weight:400;">16</div>
<div class="t" style="right:417.80px;top:381.38px;font-size:7.7px;line-height:7.7px;color:#444;font-weight:400;">23</div>
<div class="t" style="right:379.10px;top:381.38px;font-size:7.7px;line-height:7.7px;color:#444;font-weight:400;">21</div>
<div class="r" style="left:447px;top:391.5px;width:489px;height:1px;background:#dcdcdc;"></div>
<div class="r" style="left:768.2px;top:379.0px;width:26.4584px;height:11.4px;background:#3a78d6;"></div>
<div class="t" style="right:258.80px;top:381.38px;font-size:7.7px;line-height:7.7px;color:#3a78d6;font-weight:700;">76</div>
<div class="r" style="left:877.1px;top:379.0px;width:14.2355px;height:11.4px;background:#14bd7b;"></div>
<div class="t" style="right:149.50px;top:381.38px;font-size:7.7px;line-height:7.7px;color:#15b377;font-weight:700;">47</div>
<div class="t" style="left:448.70px;top:395.58px;font-size:7.7px;line-height:7.7px;color:#444;font-weight:400;">County D</div>
<div class="t" style="right:494.80px;top:395.58px;font-size:7.7px;line-height:7.7px;color:#444;font-weight:400;">14</div>
<div class="t" style="right:455.90px;top:395.58px;font-size:7.7px;line-height:7.7px;color:#444;font-weight:400;">16</div>
<div class="t" style="right:417.80px;top:395.58px;font-size:7.7px;line-height:7.7px;color:#444;font-weight:400;">16</div>
<div class="t" style="right:379.10px;top:395.58px;font-size:7.7px;line-height:7.7px;color:#444;font-weight:400;">8</div>
<div class="r" style="left:447px;top:406.0px;width:489px;height:1px;background:#dcdcdc;"></div>
<div class="r" style="left:768.2px;top:393.20000000000005px;width:18.683600000000002px;height:11.4px;background:#3a78d6;"></div>
<div class="t" style="right:258.80px;top:395.58px;font-size:7.7px;line-height:7.7px;color:#3a78d6;font-weight:700;">54</div>
<div class="r" style="left:877.1px;top:393.20000000000005px;width:11.2705px;height:11.4px;background:#14bd7b;"></div>
<div class="t" style="right:149.50px;top:395.58px;font-size:7.7px;line-height:7.7px;color:#15b377;font-weight:700;">37</div>
<div class="t" style="left:448.70px;top:409.78px;font-size:7.7px;line-height:7.7px;color:#444;font-weight:400;">County F</div>
<div class="t" style="right:494.80px;top:409.78px;font-size:7.7px;line-height:7.7px;color:#444;font-weight:400;">13</div>
<div class="t" style="right:455.90px;top:409.78px;font-size:7.7px;line-height:7.7px;color:#444;font-weight:400;">8</div>
<div class="t" style="right:417.80px;top:409.78px;font-size:7.7px;line-height:7.7px;color:#444;font-weight:400;">11</div>
<div class="t" style="right:379.10px;top:409.78px;font-size:7.7px;line-height:7.7px;color:#444;font-weight:400;">14</div>
<div class="r" style="left:447px;top:420.0px;width:489px;height:1px;background:#dcdcdc;"></div>
<div class="r" style="left:768.2px;top:407.40000000000003px;width:15.856399999999999px;height:11.4px;background:#3a78d6;"></div>
<div class="t" style="right:258.80px;top:409.78px;font-size:7.7px;line-height:7.7px;color:#3a78d6;font-weight:700;">46</div>
<div class="r" style="left:877.1px;top:407.40000000000003px;width:6.5264999999999995px;height:11.4px;background:#14bd7b;"></div>
<div class="t" style="right:149.50px;top:409.78px;font-size:7.7px;line-height:7.7px;color:#15b377;font-weight:700;">21</div>
<svg style="position:absolute;left:0;top:0" width="1024" height="538" fill="none" stroke="#7a57d9" stroke-width="0.9"><polyline points="670.0,205.6 683.1,197.4 696.1,195.6 709.2,193.8"/><polyline points="670.0,219.8 683.1,217.4 696.1,208.0 709.2,211.5"/><polyline points="670.0,222.2 683.1,234.0 696.1,222.2 709.2,230.1"/><polyline points="670.0,240.3 683.1,240.3 696.1,248.2 709.2,236.4"/><polyline points="670.0,254.5 683.1,254.5 696.1,262.4 709.2,250.6"/><polyline points="670.0,264.8 683.1,273.2 696.1,276.6 709.2,266.5"/><polyline points="670.0,290.8 683.1,279.0 696.1,288.8 709.2,282.9"/><polyline points="670.0,303.0 683.1,305.0 696.1,301.1 709.2,293.2"/><polyline points="670.0,317.2 683.1,319.2 696.1,315.3 709.2,307.4"/><polyline points="670.0,321.6 683.1,333.4 696.1,333.4 709.2,333.4"/><polyline points="670.0,341.0 683.1,347.6 696.1,335.8 709.2,339.7"/><polyline points="670.0,353.4 683.1,361.8 696.1,350.0 709.2,361.8"/><polyline points="670.0,376.0 683.1,371.8 696.1,364.2 709.2,364.2"/><polyline points="670.0,390.2 683.1,390.2 696.1,378.4 709.2,381.8"/><polyline points="670.0,395.6 683.1,392.6 696.1,392.6 709.2,404.4"/><polyline points="670.0,408.8 683.1,418.6 696.1,412.7 709.2,406.8"/></svg>
<div class="t" style="left:448.80px;top:459.08px;font-size:7.7px;line-height:7.7px;color:#111;font-weight:700;">Learn More</div>
<div class="t" style="left:448.80px;top:473.23px;font-size:8.0px;line-height:8.0px;color:#444;font-weight:400;">For more information, please contact Ann K. Emery at Ann@DepictDataStudio.com.</div>
<div class="t" style="left:899.00px;top:463.20px;font-size:11.1px;line-height:11.1px;color:#6a3fd6;font-weight:700;">depict</div>
<div class="t" style="left:899.60px;top:474.04px;font-size:6.1px;line-height:6.1px;color:#222;font-weight:700;">data studio</div>
<svg style="position:absolute;left:396px;top:517.5px" width="10" height="14" viewBox="0 0 10 14"><path d="M8 1.5 V12.5 L2 7 Z" fill="#8a8a8a"/></svg>
<div class="r" style="left:410px;top:515px;width:24px;height:19px;background:#fff;border:1px solid #cfcfcf;border-radius:3px;box-sizing:border-box;"></div>
<div class="t" style="left:415.50px;top:520.64px;font-size:9.4px;line-height:9.4px;color:#333;font-weight:400;">1</div>
<div class="t" style="left:437.60px;top:520.64px;font-size:9.4px;line-height:9.4px;color:#333;font-weight:400;">of 1</div>
<svg style="position:absolute;left:460px;top:517.5px" width="10" height="14" viewBox="0 0 10 14"><path d="M2 1.5 V12.5 L8 7 Z" fill="#8a8a8a"/></svg>
<svg style="position:absolute;left:989px;top:517px" width="13" height="15" viewBox="0 0 13 15" fill="none">
<rect x="1.5" y="1.8" width="10.2" height="12" fill="#dcebf9" stroke="#555" stroke-width="1"/><path d="M4.3 1.8 V13.8 M8.9 1.8 V13.8 M1.5 3.2 H11.7 M1.5 12.4 H11.7" stroke="#4a97e6" stroke-width="0.9"/></svg>
<div class="r" style="left:1004.5px;top:516.5px;width:17px;height:16.5px;background:#dedede;border:1px solid #bdbdbd;border-radius:3px;box-sizing:border-box;"></div>
<svg style="position:absolute;left:1004.5px;top:516.5px" width="17" height="17" viewBox="0 0 17 17" fill="none">
<path d="M8 2 L2 8 L8 14 L14 8 Z" stroke="#4a97e6" stroke-width="0.8"/>
<path d="M8 1.2 L6.6 3.2 H9.4 Z M8 14.8 L6.6 12.8 H9.4 Z M1.2 8 L3.2 6.6 V9.4 Z M14.8 8 L12.8 6.6 V9.4 Z" fill="#4a97e6"/>
<rect x="5.6" y="5.6" width="4.8" height="4.8" fill="#fff" stroke="#444" stroke-width="1"/></svg>
</body></html>
